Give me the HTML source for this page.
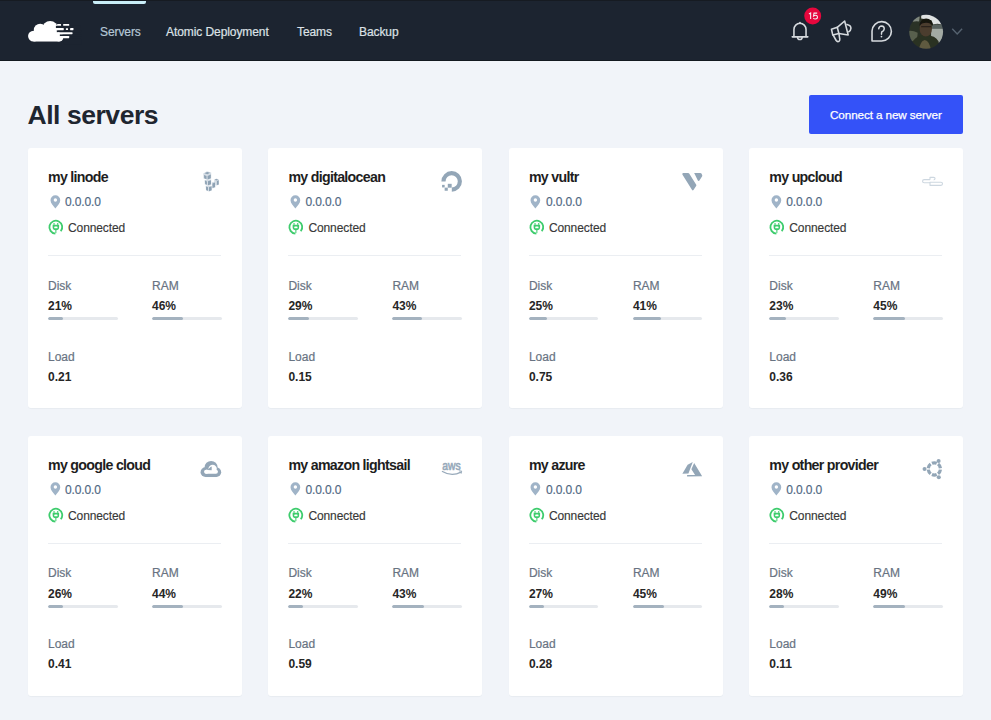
<!DOCTYPE html>
<html><head><meta charset="utf-8">
<style>
*{box-sizing:border-box;margin:0;padding:0}
html,body{width:991px;height:720px;overflow:hidden;background:#f1f4f9;font-family:"Liberation Sans",sans-serif;position:relative}
.nav{position:absolute;left:0;top:0;width:991px;height:61px;background:#1c2430;border-bottom:1px solid #131920}
.ind{position:absolute;left:93px;top:1px;width:53px;height:2.8px;background:#c9eef8;border-radius:0 0 2px 2px}
.topl{position:absolute;left:0;top:0;width:991px;height:1px;background:#161b22}
.nl{position:absolute;top:24.5px;font-size:12px;line-height:14px;color:#dde1e6;white-space:nowrap;-webkit-text-stroke:0.2px #dde1e6;letter-spacing:-0.08px}
.nl.act{color:#b5c7d6;-webkit-text-stroke:0.2px #b5c7d6}
.title{position:absolute;left:27.5px;top:99px;font-size:26.5px;line-height:32px;font-weight:bold;color:#1f2630;letter-spacing:-0.45px}
.btn{position:absolute;left:808.5px;top:95px;width:154.7px;height:39px;background:#3452f8;border-radius:2px;color:#fff;font-size:11.7px;line-height:14px;padding-top:13px;text-align:center;letter-spacing:-0.1px;-webkit-text-stroke:0.25px #fff}
.card{position:absolute;width:213.8px;height:260px;background:#fff;border-radius:3px;box-shadow:0 1px 1px rgba(30,40,60,0.04)}
.card .nm{position:absolute;left:20px;top:22px;font-size:14.2px;line-height:15px;font-weight:bold;color:#1e1e1e;white-space:nowrap;letter-spacing:-0.7px}
.card .ip{position:absolute;left:37px;top:195px;}
.ic{position:absolute}
.t{position:absolute;white-space:nowrap;font-size:12px;line-height:14px}
.ipt{color:#4f6782;letter-spacing:-0.12px;-webkit-text-stroke:0.15px #4f6782}
.con{color:#383838;letter-spacing:-0.1px;-webkit-text-stroke:0.15px #383838}
.lbl{color:#687382;-webkit-text-stroke:0.2px #687382}
.val{color:#262626;font-weight:bold}
.sep{position:absolute;left:20px;width:173px;top:107px;height:1px;background:#ebeef2}
.bar{position:absolute;height:3px;width:69.5px;background:#e6e9ed;border-radius:2px;overflow:hidden}
.bar i{position:absolute;left:0;top:0;bottom:0;background:#a4b2bf;border-radius:2px}
</style></head><body>
<div class="nav">
  <div class="topl"></div><div class="ind"></div>
<svg style="position:absolute;left:22px;top:14px;" width="60" height="36" viewBox="0 0 991 595"><g fill="#fff"><circle cx="190" cy="365" r="90"/><circle cx="300" cy="265" r="105"/><circle cx="465" cy="245" r="130"/><rect x="190" y="300" width="430" height="155"/><circle cx="615" cy="385" r="70"/></g><g fill="#1c2430"><rect x="560" y="195" width="400" height="37"/><rect x="575" y="268" width="400" height="32"/><rect x="625" y="335" width="400" height="30"/><rect x="680" y="400" width="300" height="100"/></g><g fill="#fff"><rect x="580" y="165" width="65" height="30" rx="6"/><rect x="680" y="165" width="100" height="30" rx="6"/><rect x="575" y="232" width="115" height="36" rx="6"/><rect x="725" y="235" width="35" height="30" rx="6"/><rect x="795" y="232" width="55" height="36" rx="6"/><rect x="580" y="300" width="255" height="35" rx="8"/><rect x="625" y="365" width="155" height="35" rx="8"/></g></svg><svg style="position:absolute;left:780px;top:2px;" width="120" height="50" viewBox="0 0 991 413"><g fill="none" stroke="#d6dade" stroke-width="13" stroke-linecap="round" stroke-linejoin="round"><path d="M101 288 H230"/><path d="M115 286 V228 A 50 52 0 0 1 215 228 V286"/><path d="M165 170 V177"/><path d="M145 291 A 19 19 0 0 0 183 291"/><path d="M425 225 L 473 209 L 486 260 L 436 273 Z"/><path d="M473 209 L 534 157 L 563 273 L 486 260"/><path d="M553 185 Q 586 192 586 216 Q 584 240 568 246"/><path d="M439 273 L 464 318 Q 474 332 488 324 Q 497 317 493 304 L 487 262"/><path d="M760 322 V240 A 80 80 0 1 1 840 322 Z"/></g><path d="M815 222 Q 818 198 840 198 Q 862 200 861 222 Q 860 238 840 248 L 838 266" fill="none" stroke="#d6dade" stroke-width="12" stroke-linecap="round"/><circle cx="838" cy="286" r="7.5" fill="#d6dade"/><circle cx="270" cy="115" r="70" fill="#e6073d"/><path d="M239 99 L 253 90 V 141 M 307 92 H 281 L 277 116 Q 287 108 296 109 Q 310 111 310 125 Q 309 141 293 141 Q 281 141 275 132" fill="none" stroke="#f2f2f4" stroke-width="9"/></svg><svg style="position:absolute;left:900px;top:8px;" width="70" height="48" viewBox="0 0 991 680"><defs><clipPath id="av"><circle cx="370" cy="337" r="240"/></clipPath><filter id="avb" x="-10%" y="-10%" width="120%" height="120%"><feGaussianBlur stdDeviation="10"/></filter></defs><g clip-path="url(#av)"><g filter="url(#avb)"><rect x="80" y="60" width="600" height="600" fill="#2b3126"/><path d="M300 60 L 640 60 L 640 260 Q 560 205 470 235 L 445 175 L 300 150 Z" fill="#dfe2e2"/><path d="M180 130 Q 230 105 280 120 L 270 190 Q 220 180 180 195 Z" fill="#7f877d"/><path d="M450 245 Q 520 212 640 255 L 640 300 L 450 300 Z" fill="#59625f"/><rect x="440" y="295" width="200" height="200" fill="#a3aaa4"/><path d="M100 330 Q 170 310 250 350 L 240 470 L 100 470 Z" fill="#59604d"/><path d="M150 660 L 180 470 Q 260 370 370 385 Q 500 385 545 470 L 580 660 Z" fill="#2c3022"/><path d="M255 660 Q 275 470 350 455 Q 430 465 448 660 Z" fill="#5f5a3f"/><ellipse cx="365" cy="295" rx="88" ry="108" fill="#4c3c2d"/><path d="M272 255 Q 285 150 370 148 Q 458 152 465 255 Q 430 205 370 208 Q 305 208 272 255 Z" fill="#16140f"/><path d="M300 265 H 440" stroke="#221c16" stroke-width="14"/></g></g><path d="M740 295 L 810 368 L 880 295" fill="none" stroke="#55626f" stroke-width="20"/></svg>
  <div class="nl act" style="left:100px">Servers</div>
  <div class="nl" style="left:166px">Atomic Deployment</div>
  <div class="nl" style="left:297px">Teams</div>
  <div class="nl" style="left:359px">Backup</div>
</div>
<div class="title">All servers</div>
<div class="btn">Connect a new server</div>
<div class="card" style="left:28px;top:148px">
<div class="nm">my linode</div>

<svg style="position:absolute;left:17.6px;top:43.6px;" width="20" height="45" viewBox="0 0 320 720"><path d="M150 262 C 118 220 72 178 72 130 A 78 78 0 0 1 228 130 C 228 178 182 220 150 262 Z" fill="#a0b4c8"/><circle cx="150" cy="128" r="27" fill="#fff"/></svg>
<div class="t ipt" style="left:37px;top:47px">0.0.0.0</div>
<svg style="position:absolute;left:17.8px;top:44px;" width="20" height="45" viewBox="0 0 320 720"><path d="M150 665 A 103 103 0 1 1 236 628" fill="none" stroke="#3ecc6d" stroke-width="29"/><path d="M106 522 H210 V560 Q210 612 158 612 Q106 612 106 560 Z" fill="#3ecc6d"/><rect x="120" y="496" width="17" height="30" fill="#3ecc6d"/><rect x="179" y="496" width="17" height="30" fill="#3ecc6d"/><rect x="132" y="550" width="52" height="30" rx="10" fill="#fff"/><rect x="150" y="608" width="16" height="50" fill="#3ecc6d"/></svg>
<div class="t con" style="left:40px;top:73px">Connected</div>
<div class="sep"></div>
<div class="t lbl" style="left:20px;top:130.6px">Disk</div>
<div class="t val" style="left:20px;top:151px">21%</div>
<div class="bar" style="left:20px;top:169.4px"><i style="width:14.8px"></i></div>
<div class="t lbl" style="left:124px;top:130.6px">RAM</div>
<div class="t val" style="left:124px;top:151px">46%</div>
<div class="bar" style="left:124px;top:169.4px"><i style="width:31.3px"></i></div>
<div class="t lbl" style="left:20px;top:201.6px">Load</div>
<div class="t val" style="left:20px;top:221.6px">0.21</div>
</div>
<div class="card" style="left:268.4px;top:148px">
<div class="nm">my digitalocean</div>

<svg style="position:absolute;left:17.6px;top:43.6px;" width="20" height="45" viewBox="0 0 320 720"><path d="M150 262 C 118 220 72 178 72 130 A 78 78 0 0 1 228 130 C 228 178 182 220 150 262 Z" fill="#a0b4c8"/><circle cx="150" cy="128" r="27" fill="#fff"/></svg>
<div class="t ipt" style="left:37px;top:47px">0.0.0.0</div>
<svg style="position:absolute;left:17.8px;top:44px;" width="20" height="45" viewBox="0 0 320 720"><path d="M150 665 A 103 103 0 1 1 236 628" fill="none" stroke="#3ecc6d" stroke-width="29"/><path d="M106 522 H210 V560 Q210 612 158 612 Q106 612 106 560 Z" fill="#3ecc6d"/><rect x="120" y="496" width="17" height="30" fill="#3ecc6d"/><rect x="179" y="496" width="17" height="30" fill="#3ecc6d"/><rect x="132" y="550" width="52" height="30" rx="10" fill="#fff"/><rect x="150" y="608" width="16" height="50" fill="#3ecc6d"/></svg>
<div class="t con" style="left:40px;top:73px">Connected</div>
<div class="sep"></div>
<div class="t lbl" style="left:20px;top:130.6px">Disk</div>
<div class="t val" style="left:20px;top:151px">29%</div>
<div class="bar" style="left:20px;top:169.4px"><i style="width:20.5px"></i></div>
<div class="t lbl" style="left:124px;top:130.6px">RAM</div>
<div class="t val" style="left:124px;top:151px">43%</div>
<div class="bar" style="left:124px;top:169.4px"><i style="width:30.1px"></i></div>
<div class="t lbl" style="left:20px;top:201.6px">Load</div>
<div class="t val" style="left:20px;top:221.6px">0.15</div>
</div>
<div class="card" style="left:508.9px;top:148px">
<div class="nm">my vultr</div>

<svg style="position:absolute;left:17.6px;top:43.6px;" width="20" height="45" viewBox="0 0 320 720"><path d="M150 262 C 118 220 72 178 72 130 A 78 78 0 0 1 228 130 C 228 178 182 220 150 262 Z" fill="#a0b4c8"/><circle cx="150" cy="128" r="27" fill="#fff"/></svg>
<div class="t ipt" style="left:37px;top:47px">0.0.0.0</div>
<svg style="position:absolute;left:17.8px;top:44px;" width="20" height="45" viewBox="0 0 320 720"><path d="M150 665 A 103 103 0 1 1 236 628" fill="none" stroke="#3ecc6d" stroke-width="29"/><path d="M106 522 H210 V560 Q210 612 158 612 Q106 612 106 560 Z" fill="#3ecc6d"/><rect x="120" y="496" width="17" height="30" fill="#3ecc6d"/><rect x="179" y="496" width="17" height="30" fill="#3ecc6d"/><rect x="132" y="550" width="52" height="30" rx="10" fill="#fff"/><rect x="150" y="608" width="16" height="50" fill="#3ecc6d"/></svg>
<div class="t con" style="left:40px;top:73px">Connected</div>
<div class="sep"></div>
<div class="t lbl" style="left:20px;top:130.6px">Disk</div>
<div class="t val" style="left:20px;top:151px">25%</div>
<div class="bar" style="left:20px;top:169.4px"><i style="width:18.2px"></i></div>
<div class="t lbl" style="left:124px;top:130.6px">RAM</div>
<div class="t val" style="left:124px;top:151px">41%</div>
<div class="bar" style="left:124px;top:169.4px"><i style="width:28.2px"></i></div>
<div class="t lbl" style="left:20px;top:201.6px">Load</div>
<div class="t val" style="left:20px;top:221.6px">0.75</div>
</div>
<div class="card" style="left:749.3px;top:148px">
<div class="nm">my upcloud</div>

<svg style="position:absolute;left:17.6px;top:43.6px;" width="20" height="45" viewBox="0 0 320 720"><path d="M150 262 C 118 220 72 178 72 130 A 78 78 0 0 1 228 130 C 228 178 182 220 150 262 Z" fill="#a0b4c8"/><circle cx="150" cy="128" r="27" fill="#fff"/></svg>
<div class="t ipt" style="left:37px;top:47px">0.0.0.0</div>
<svg style="position:absolute;left:17.8px;top:44px;" width="20" height="45" viewBox="0 0 320 720"><path d="M150 665 A 103 103 0 1 1 236 628" fill="none" stroke="#3ecc6d" stroke-width="29"/><path d="M106 522 H210 V560 Q210 612 158 612 Q106 612 106 560 Z" fill="#3ecc6d"/><rect x="120" y="496" width="17" height="30" fill="#3ecc6d"/><rect x="179" y="496" width="17" height="30" fill="#3ecc6d"/><rect x="132" y="550" width="52" height="30" rx="10" fill="#fff"/><rect x="150" y="608" width="16" height="50" fill="#3ecc6d"/></svg>
<div class="t con" style="left:40px;top:73px">Connected</div>
<div class="sep"></div>
<div class="t lbl" style="left:20px;top:130.6px">Disk</div>
<div class="t val" style="left:20px;top:151px">23%</div>
<div class="bar" style="left:20px;top:169.4px"><i style="width:16.3px"></i></div>
<div class="t lbl" style="left:124px;top:130.6px">RAM</div>
<div class="t val" style="left:124px;top:151px">45%</div>
<div class="bar" style="left:124px;top:169.4px"><i style="width:31.4px"></i></div>
<div class="t lbl" style="left:20px;top:201.6px">Load</div>
<div class="t val" style="left:20px;top:221.6px">0.36</div>
</div>
<div class="card" style="left:28px;top:435.5px">
<div class="nm">my google cloud</div>

<svg style="position:absolute;left:17.6px;top:43.6px;" width="20" height="45" viewBox="0 0 320 720"><path d="M150 262 C 118 220 72 178 72 130 A 78 78 0 0 1 228 130 C 228 178 182 220 150 262 Z" fill="#a0b4c8"/><circle cx="150" cy="128" r="27" fill="#fff"/></svg>
<div class="t ipt" style="left:37px;top:47px">0.0.0.0</div>
<svg style="position:absolute;left:17.8px;top:44px;" width="20" height="45" viewBox="0 0 320 720"><path d="M150 665 A 103 103 0 1 1 236 628" fill="none" stroke="#3ecc6d" stroke-width="29"/><path d="M106 522 H210 V560 Q210 612 158 612 Q106 612 106 560 Z" fill="#3ecc6d"/><rect x="120" y="496" width="17" height="30" fill="#3ecc6d"/><rect x="179" y="496" width="17" height="30" fill="#3ecc6d"/><rect x="132" y="550" width="52" height="30" rx="10" fill="#fff"/><rect x="150" y="608" width="16" height="50" fill="#3ecc6d"/></svg>
<div class="t con" style="left:40px;top:73px">Connected</div>
<div class="sep"></div>
<div class="t lbl" style="left:20px;top:130.6px">Disk</div>
<div class="t val" style="left:20px;top:151px">26%</div>
<div class="bar" style="left:20px;top:169.4px"><i style="width:14.6px"></i></div>
<div class="t lbl" style="left:124px;top:130.6px">RAM</div>
<div class="t val" style="left:124px;top:151px">44%</div>
<div class="bar" style="left:124px;top:169.4px"><i style="width:31.3px"></i></div>
<div class="t lbl" style="left:20px;top:201.6px">Load</div>
<div class="t val" style="left:20px;top:221.6px">0.41</div>
</div>
<div class="card" style="left:268.4px;top:435.5px">
<div class="nm">my amazon lightsail</div>

<svg style="position:absolute;left:17.6px;top:43.6px;" width="20" height="45" viewBox="0 0 320 720"><path d="M150 262 C 118 220 72 178 72 130 A 78 78 0 0 1 228 130 C 228 178 182 220 150 262 Z" fill="#a0b4c8"/><circle cx="150" cy="128" r="27" fill="#fff"/></svg>
<div class="t ipt" style="left:37px;top:47px">0.0.0.0</div>
<svg style="position:absolute;left:17.8px;top:44px;" width="20" height="45" viewBox="0 0 320 720"><path d="M150 665 A 103 103 0 1 1 236 628" fill="none" stroke="#3ecc6d" stroke-width="29"/><path d="M106 522 H210 V560 Q210 612 158 612 Q106 612 106 560 Z" fill="#3ecc6d"/><rect x="120" y="496" width="17" height="30" fill="#3ecc6d"/><rect x="179" y="496" width="17" height="30" fill="#3ecc6d"/><rect x="132" y="550" width="52" height="30" rx="10" fill="#fff"/><rect x="150" y="608" width="16" height="50" fill="#3ecc6d"/></svg>
<div class="t con" style="left:40px;top:73px">Connected</div>
<div class="sep"></div>
<div class="t lbl" style="left:20px;top:130.6px">Disk</div>
<div class="t val" style="left:20px;top:151px">22%</div>
<div class="bar" style="left:20px;top:169.4px"><i style="width:14.8px"></i></div>
<div class="t lbl" style="left:124px;top:130.6px">RAM</div>
<div class="t val" style="left:124px;top:151px">43%</div>
<div class="bar" style="left:124px;top:169.4px"><i style="width:31.4px"></i></div>
<div class="t lbl" style="left:20px;top:201.6px">Load</div>
<div class="t val" style="left:20px;top:221.6px">0.59</div>
</div>
<div class="card" style="left:508.9px;top:435.5px">
<div class="nm">my azure</div>

<svg style="position:absolute;left:17.6px;top:43.6px;" width="20" height="45" viewBox="0 0 320 720"><path d="M150 262 C 118 220 72 178 72 130 A 78 78 0 0 1 228 130 C 228 178 182 220 150 262 Z" fill="#a0b4c8"/><circle cx="150" cy="128" r="27" fill="#fff"/></svg>
<div class="t ipt" style="left:37px;top:47px">0.0.0.0</div>
<svg style="position:absolute;left:17.8px;top:44px;" width="20" height="45" viewBox="0 0 320 720"><path d="M150 665 A 103 103 0 1 1 236 628" fill="none" stroke="#3ecc6d" stroke-width="29"/><path d="M106 522 H210 V560 Q210 612 158 612 Q106 612 106 560 Z" fill="#3ecc6d"/><rect x="120" y="496" width="17" height="30" fill="#3ecc6d"/><rect x="179" y="496" width="17" height="30" fill="#3ecc6d"/><rect x="132" y="550" width="52" height="30" rx="10" fill="#fff"/><rect x="150" y="608" width="16" height="50" fill="#3ecc6d"/></svg>
<div class="t con" style="left:40px;top:73px">Connected</div>
<div class="sep"></div>
<div class="t lbl" style="left:20px;top:130.6px">Disk</div>
<div class="t val" style="left:20px;top:151px">27%</div>
<div class="bar" style="left:20px;top:169.4px"><i style="width:14.8px"></i></div>
<div class="t lbl" style="left:124px;top:130.6px">RAM</div>
<div class="t val" style="left:124px;top:151px">45%</div>
<div class="bar" style="left:124px;top:169.4px"><i style="width:31.3px"></i></div>
<div class="t lbl" style="left:20px;top:201.6px">Load</div>
<div class="t val" style="left:20px;top:221.6px">0.28</div>
</div>
<div class="card" style="left:749.3px;top:435.5px">
<div class="nm">my other provider</div>

<svg style="position:absolute;left:17.6px;top:43.6px;" width="20" height="45" viewBox="0 0 320 720"><path d="M150 262 C 118 220 72 178 72 130 A 78 78 0 0 1 228 130 C 228 178 182 220 150 262 Z" fill="#a0b4c8"/><circle cx="150" cy="128" r="27" fill="#fff"/></svg>
<div class="t ipt" style="left:37px;top:47px">0.0.0.0</div>
<svg style="position:absolute;left:17.8px;top:44px;" width="20" height="45" viewBox="0 0 320 720"><path d="M150 665 A 103 103 0 1 1 236 628" fill="none" stroke="#3ecc6d" stroke-width="29"/><path d="M106 522 H210 V560 Q210 612 158 612 Q106 612 106 560 Z" fill="#3ecc6d"/><rect x="120" y="496" width="17" height="30" fill="#3ecc6d"/><rect x="179" y="496" width="17" height="30" fill="#3ecc6d"/><rect x="132" y="550" width="52" height="30" rx="10" fill="#fff"/><rect x="150" y="608" width="16" height="50" fill="#3ecc6d"/></svg>
<div class="t con" style="left:40px;top:73px">Connected</div>
<div class="sep"></div>
<div class="t lbl" style="left:20px;top:130.6px">Disk</div>
<div class="t val" style="left:20px;top:151px">28%</div>
<div class="bar" style="left:20px;top:169.4px"><i style="width:14.4px"></i></div>
<div class="t lbl" style="left:124px;top:130.6px">RAM</div>
<div class="t val" style="left:124px;top:151px">49%</div>
<div class="bar" style="left:124px;top:169.4px"><i style="width:31.4px"></i></div>
<div class="t lbl" style="left:20px;top:201.6px">Load</div>
<div class="t val" style="left:20px;top:221.6px">0.11</div>
</div>
<svg style="position:absolute;left:200px;top:168px;" width="24" height="26" viewBox="0 0 24 26"><defs><filter id="lb" x="-20%" y="-20%" width="140%" height="140%"><feGaussianBlur stdDeviation="0.25"/></filter></defs><g filter="url(#lb)"><polygon points="3.2,5.5 7,3.2 11.2,4.5 11.2,10.5 7.5,11.8 3.5,10.5" fill="#d5dde5"/><polygon points="4.5,12.2 7.5,11.6 11.2,11.5 11.4,16.8 8,17.6 4.8,16.6" fill="#d5dde5"/><polygon points="5.6,17.8 8.5,17.4 11.6,17.8 11.8,22.6 9,23.4 6,22.6" fill="#d5dde5"/><polygon points="12,14.2 15.3,13.6 15.4,19.4 12.3,20.6" fill="#d5dde5"/><polygon points="14.2,11.4 16.5,10.4 18.8,11.5 18.9,16.8 16.6,17.6 14.4,16.6" fill="#d5dde5"/><polygon points="4.5,5.2 7.2,3.9 10,4.8 7.4,6.2" fill="#8ea2b4"/><polygon points="4,7 6.5,8 6.5,11.2 4.2,10.2" fill="#8ea2b4"/><polygon points="7.6,8 10.8,6.4 10.8,10.2 7.6,11.4" fill="#8ea2b4"/><polygon points="5,12.6 6.9,13.4 6.9,16.8 5.2,16.0" fill="#8ea2b4"/><polygon points="8,13.3 11,12.3 11,16.2 8,17.2" fill="#8ea2b4"/><polygon points="6,18.5 8,19.3 8,22.8 6.2,22" fill="#8ea2b4"/><polygon points="9,19.2 11.6,18.3 11.6,22.2 9,23.2" fill="#8ea2b4"/><polygon points="12.4,15.6 15,14.5 15.1,19 12.5,20.1" fill="#8ea2b4"/><polygon points="14.6,11.5 16.5,10.9 18.2,11.6 16.2,12.4" fill="#8ea2b4"/><polygon points="16.9,13.1 18.7,12.3 18.7,16.4 16.9,17.1" fill="#8ea2b4"/></g></svg><svg style="position:absolute;left:420px;top:155px;" width="60" height="50" viewBox="0 0 864 720"><path d="M308 380 A 148 148 0 1 1 458 528 L 458 468 A 88 88 0 1 0 368 380 Z" fill="#93a6b7"/><rect x="400" y="415" width="56" height="56" fill="#93a6b7"/><rect x="355" y="470" width="45" height="45" fill="#93a6b7"/><rect x="318" y="430" width="37" height="37" fill="#93a6b7"/></svg><svg style="position:absolute;left:660px;top:155px;" width="60" height="50" viewBox="0 0 864 720"><path d="M335 258 L 405 258 Q 415 258 420 266 L 522 430 Q 527 440 520 448 L 482 505 Q 472 518 462 505 L 322 282 Q 315 258 335 258 Z" fill="#93a6b7"/><path d="M492 258 L 580 258 Q 590 258 597 268 L 608 290 Q 612 300 605 310 L 565 370 Q 555 380 545 368 Z" fill="#93a6b7"/></svg><svg style="position:absolute;left:900px;top:155px;" width="60" height="50" viewBox="0 0 864 720"><g fill="none" stroke="#cdd7e0" stroke-width="16" stroke-linejoin="round"><path d="M432 355 V322 H485 Q505 322 505 340 Q505 358 485 358"/><path d="M432 355 H348 Q325 355 325 378 Q325 400 348 400 H432"/><path d="M432 392 H590 Q612 392 612 415 Q612 437 590 437 H432 Z"/></g></svg><svg style="position:absolute;left:180px;top:443px;" width="60" height="50" viewBox="0 0 864 720"><g fill="#93a6b7"><circle cx="448" cy="352" r="94"/><circle cx="366" cy="420" r="70"/><circle cx="524" cy="420" r="69"/><rect x="366" y="350" width="158" height="140"/></g><g fill="#fff"><rect x="350" y="384" width="196" height="57" rx="28"/><circle cx="470" cy="372" r="60"/></g><path d="M395 390 L 440 345 L 456 338 L 456 393 Z" fill="#93a6b7"/><rect x="350" y="384" width="60" height="57" rx="28" fill="#fff"/></svg><svg style="position:absolute;left:420px;top:443px;" width="60" height="50" viewBox="0 0 864 720"><text x="454" y="385" font-family="Liberation Sans" font-size="185" fill="#97a9ba" stroke="#97a9ba" stroke-width="9" text-anchor="middle" textLength="265" lengthAdjust="spacingAndGlyphs">aws</text><path d="M316 408 Q 455 492 590 420" fill="none" stroke="#97a9ba" stroke-width="18"/><path d="M562 402 L 600 404 L 592 442" fill="none" stroke="#97a9ba" stroke-width="14"/></svg><svg style="position:absolute;left:660px;top:443px;" width="60" height="50" viewBox="0 0 864 720"><path d="M322 442 L 398 312 L 472 272 L 410 440 Z" fill="#93a6b7"/><path d="M492 288 L 607 480 L 390 482 L 390 460 L 505 460 L 452 378 Z" fill="#93a6b7"/></svg><svg style="position:absolute;left:900px;top:443px;" width="60" height="50" viewBox="0 0 864 720"><defs><filter id="ubb" x="-10%" y="-10%" width="120%" height="120%"><feGaussianBlur stdDeviation="5"/></filter></defs><g filter="url(#ubb)"><path d="M581.9 384.1 A 88 88 0 0 1 547.6 443.7" fill="none" stroke="#93a6b7" stroke-width="47"/><path d="M529.0 454.4 A 88 88 0 0 1 460.2 454.4" fill="none" stroke="#93a6b7" stroke-width="47"/><path d="M441.6 443.7 A 88 88 0 0 1 407.3 384.1" fill="none" stroke="#93a6b7" stroke-width="47"/><path d="M407.3 362.7 A 88 88 0 0 1 441.6 303.1" fill="none" stroke="#93a6b7" stroke-width="47"/><path d="M460.2 292.4 A 88 88 0 0 1 529.0 292.4" fill="none" stroke="#93a6b7" stroke-width="47"/><path d="M547.6 303.1 A 88 88 0 0 1 581.9 362.7" fill="none" stroke="#93a6b7" stroke-width="47"/><circle cx="353.6" cy="373.4" r="29" fill="#93a6b7"/><circle cx="556.1" cy="257.7" r="29" fill="#93a6b7"/><circle cx="558.9" cy="494.4" r="29" fill="#93a6b7"/></g></svg>
</body></html>
